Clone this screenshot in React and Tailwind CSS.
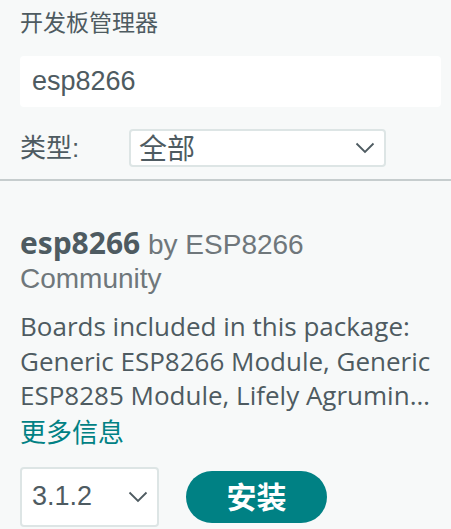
import React from 'react';

const Chevron = () => (
  <svg width="20" height="12" viewBox="0 0 20 12" fill="none">
    <polyline points="1.5,1.5 10,10 18.5,1.5" stroke="#4e5b61" strokeWidth="1.8" />
  </svg>
);

const App = () => {
  const sans = { fontFamily: '"Liberation Sans", "Noto Sans CJK SC", sans-serif' };
  const open = { fontFamily: '"Open Sans", "Noto Sans CJK SC", sans-serif' };

  return (
    <div className="w-[451px] h-[529px] overflow-hidden bg-[#f7f9f9] text-[#4e5b61]" style={sans}>
      <div className="pl-5 pr-[10px] pt-[6px]">
        <div className="text-[23px] leading-[32px]" style={open}>开发板管理器</div>
        <div className="mt-[18px] h-[51px] bg-white rounded-[4px] flex items-center pl-3 text-[27px]">
          esp8266
        </div>
        <div className="mt-[22px] h-[38px] flex items-center">
          <span className="w-[109px] text-[26px]" style={sans}>类型:</span>
          <div className="w-[257px] h-[38px] bg-white border-2 border-[#dde5e5] rounded-[4px] flex items-center justify-between pl-2 pr-[9px]">
            <span className="text-[28px]" style={open}>全部</span>
            <Chevron />
          </div>
        </div>
      </div>
      <div className="mt-3 h-[2px] bg-[#c6cdce]" />
      <div className="pl-5 pr-5 pt-[45px]">
        <div className="text-[28px] leading-[34px]">
          <span className="font-bold text-[30px]" style={open}>esp8266</span>{' '}
          <span className="text-[#6f777b]">by ESP8266 Community</span>
        </div>
        <p className="mt-[13px] text-[26px] leading-[34.5px] line-clamp-3" style={open}>
          Boards included in this package: Generic ESP8266 Module, Generic ESP8285 Module, Lifely Agrumino Lemon v4, WeMos D1 R1, ESPDuino (ESP-13 Module), Adafruit Feather HUZZAH ESP8266
        </p>
        <div className="mt-[2px] text-[26px] leading-[34px] text-[#008184]" style={open}>更多信息</div>
        <div className="mt-[18px] flex items-center">
          <div className="w-[139px] h-[60px] bg-white border-2 border-[#dde5e5] rounded-[4px] flex items-center justify-between pl-[10px] pr-[9px]">
            <span className="text-[27px]">3.1.2</span>
            <Chevron />
          </div>
          <button className="ml-[27px] w-[141px] h-[52px] rounded-full bg-[#008184] text-white font-bold text-[30px]" style={open}>
            安装
          </button>
        </div>
      </div>
    </div>
  );
};

export default App;
